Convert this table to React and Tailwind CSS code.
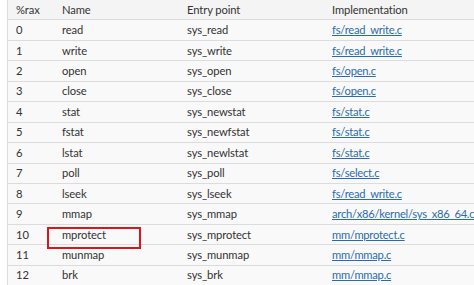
const rows = [
  ['0', 'read', 'sys_read', 'fs/read_write.c'],
  ['1', 'write', 'sys_write', 'fs/read_write.c'],
  ['2', 'open', 'sys_open', 'fs/open.c'],
  ['3', 'close', 'sys_close', 'fs/open.c'],
  ['4', 'stat', 'sys_newstat', 'fs/stat.c'],
  ['5', 'fstat', 'sys_newfstat', 'fs/stat.c'],
  ['6', 'lstat', 'sys_newlstat', 'fs/stat.c'],
  ['7', 'poll', 'sys_poll', 'fs/select.c'],
  ['8', 'lseek', 'sys_lseek', 'fs/read_write.c'],
  ['9', 'mmap', 'sys_mmap', 'arch/x86/kernel/sys_x86_64.c'],
  ['10', 'mprotect', 'sys_mprotect', 'mm/mprotect.c'],
  ['11', 'munmap', 'sys_munmap', 'mm/mmap.c'],
  ['12', 'brk', 'sys_brk', 'mm/mmap.c'],
]

function Row({ cells, header }) {
  return (
    <div
      className={
        'grid grid-cols-[46px_125px_145px_1fr] h-[20.45px] items-center border-b border-[#dcdcdc] ' +
        (header ? 'bg-[#f4f4f4]' : 'bg-[#f9f9f9]')
      }
    >
      {cells.map((c, i) => (
        <div key={i} className="relative pl-[8px] whitespace-nowrap leading-[16px]">
          {i === 3 && !header ? (
            <a className="text-[#2b6cb0] underline underline-offset-1 decoration-[#2b6cb0] tracking-[-0.25px]">{c}</a>
          ) : (
            <span>{c}</span>
          )}
          {i === 1 && c === 'mprotect' && (
            <div className="absolute left-[-7px] top-[0px] w-[94px] h-[22px] border-2 border-[#d9161c]" />
          )}
        </div>
      ))}
    </div>
  )
}

export default function App() {
  return (
    <div
      className="w-[474px] h-[285px] overflow-hidden bg-white pl-[7px] text-[11.2px] tracking-[-0.1px] text-[#333]"
      style={{ fontFamily: 'Lato, "Open Sans", sans-serif' }}
    >
      <div className="border-l border-[#dcdcdc]">
        <Row header cells={['%rax', 'Name', 'Entry point', 'Implementation']} />
        {rows.map((r) => (
          <Row key={r[0]} cells={r} />
        ))}
      </div>
    </div>
  )
}
